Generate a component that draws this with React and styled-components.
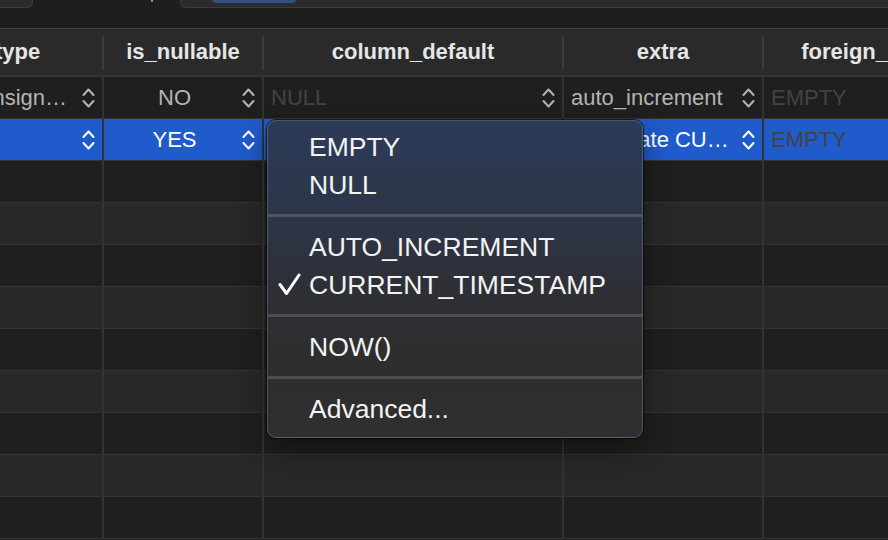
import styled, { createGlobalStyle } from 'styled-components';

const GlobalStyle = createGlobalStyle`
  html, body {
    margin: 0;
    padding: 0;
    background: #1e1e1e;
  }

  body {
    font-family: 'Liberation Sans', Arial, sans-serif;
  }
`;

const COLUMNS = '187px 160px 300px 200px 200px';

const StyledPage = styled.div`
  position: relative;
  width: 888px;
  height: 540px;
  overflow: hidden;
  background: #1e1e1e;
  display: flex;
  flex-direction: column;
`;

const StyledTabBar = styled.div`
  height: 28px;
  flex: none;
  display: flex;
  align-items: flex-start;
`;

const StyledTab = styled.div`
  height: 8px;
  box-sizing: border-box;
  background: #2b2b2b;
  border-bottom: 1px solid #3c3c3c;

  ${({ side }) =>
    side === 'left'
      ? `
      width: 33px;
      border-right: 1px solid #3c3c3c;
      border-bottom-right-radius: 6px;
  `
      : `
      flex: 1;
      padding-left: 31px;
      border-left: 1px solid #3c3c3c;
      border-bottom-left-radius: 6px;
  `}
`;

const StyledTabGap = styled.div`
  width: 147px;
  display: flex;
  justify-content: flex-end;
  padding-right: 27px;
  box-sizing: border-box;
`;

const StyledDot = styled.span`
  width: 2px;
  height: 2px;
  background: #8a8a8a;
`;

const StyledPill = styled.div`
  width: 84px;
  height: 4px;
  margin-top: -1px;
  background: #33507e;
  border-radius: 0 0 4px 4px;
`;

const StyledTable = styled.div`
  flex: 1;
  margin-left: -83px;
  display: flex;
  flex-direction: column;
`;

const StyledHeader = styled.div`
  display: grid;
  grid-template-columns: ${COLUMNS};
  height: 46px;
  background: #2a2a2b;
  border-top: 1px solid #454545;
  border-bottom: 2px solid #353535;
`;

const StyledHeaderCell = styled.div`
  position: relative;
  display: flex;
  align-items: center;
  justify-content: center;
  color: #e6e6e6;
  font-size: 22px;
  font-weight: bold;
  white-space: nowrap;
  padding-right: 2px;
  padding-left: ${({ shift }) => shift || 0}px;

  &::after {
    content: '';
    position: absolute;
    right: 0;
    top: 7px;
    bottom: 5px;
    width: 2px;
    background: #3b3b3b;
  }
`;

const StyledRow = styled.div`
  display: grid;
  grid-template-columns: ${COLUMNS};
  height: 42px;
  box-sizing: border-box;
  border-bottom: 1px solid #333;
  background: ${({ selected, alt }) =>
    selected ? '#1f5bcb' : alt ? '#282828' : '#1f1f1f'};
`;

const StyledCell = styled.div`
  min-width: 0;
  display: flex;
  align-items: center;
  gap: 4px;
  padding: 0 7px;
  border-right: 2px solid #333;
  font-size: 22px;
  color: ${({ selected }) => (selected ? '#fff' : '#b4b4b4')};
`;

const StyledText = styled.span`
  flex: 1;
  min-width: 0;
  overflow: hidden;
  white-space: nowrap;
  text-overflow: ellipsis;
  text-align: ${({ align }) => align || 'left'};

  ${({ placeholder }) =>
    placeholder &&
    `
      color: #434343;
  `}
`;

const StyledChevrons = styled.svg`
  flex: none;
  width: 13px;
  height: 22px;
`;

const StyledMenu = styled.div`
  position: absolute;
  left: 267px;
  top: 120px;
  width: 376px;
  box-sizing: border-box;
  padding: 7px 0 9px;
  border-radius: 9px;
  border: 1px solid rgba(150, 165, 195, 0.35);
  background: linear-gradient(
    180deg,
    #2c3b59 0%,
    #2d3649 28%,
    #2e3037 52%,
    #2e2e2f 75%,
    #2f2f2f 100%
  );
  box-shadow: 0 0 0 1px rgba(0, 0, 0, 0.65), 0 10px 28px rgba(0, 0, 0, 0.45);
`;

const StyledMenuItem = styled.div`
  position: relative;
  height: 38px;
  line-height: 38px;
  padding-left: 41px;
  font-size: 26.5px;
  color: #f3f3f3;
  white-space: nowrap;
`;

const StyledCheck = styled.svg`
  position: absolute;
  left: 10px;
  top: 7px;
  width: 23px;
  height: 23px;
`;

const StyledSeparator = styled.div`
  height: 3px;
  margin: 10px 0 11px;
  background: rgba(255, 255, 255, 0.15);
`;

const Chevrons = () => (
  <StyledChevrons viewBox='0 0 13 22' fill='none'>
    <path
      d='M1.5 8 L6.5 2.5 L11.5 8 M1.5 14 L6.5 19.5 L11.5 14'
      stroke='currentColor'
      strokeWidth='2'
      strokeLinecap='round'
      strokeLinejoin='round'
    />
  </StyledChevrons>
);

const headers = ['type', 'is_nullable', 'column_default', 'extra', 'foreign_key'];

const rows = [
  [
    { text: 'int(8) unsigned zerofill', chevron: true },
    { text: 'NO', align: 'center', chevron: true },
    { text: 'NULL', placeholder: true, chevron: true },
    { text: 'auto_increment', chevron: true },
    { text: 'EMPTY', placeholder: true },
  ],
  [
    { text: '', chevron: true },
    { text: 'YES', align: 'center', chevron: true },
    { text: 'CURRENT_TIMESTAMP', chevron: true },
    { text: 'on update CURRENT_TIMESTAMP', chevron: true },
    { text: 'EMPTY', placeholder: true },
  ],
];

const emptyRows = 9;

const menu = [
  ['EMPTY', 'NULL'],
  ['AUTO_INCREMENT', 'CURRENT_TIMESTAMP'],
  ['NOW()'],
  ['Advanced...'],
];

const App = () => {
  const allRows = [
    ...rows,
    ...Array.from({ length: emptyRows }, () => headers.map(() => ({ text: '' }))),
  ];

  return (
    <>
      <GlobalStyle />
      <StyledPage>
        <StyledTabBar>
          <StyledTab side='left' />
          <StyledTabGap>
            <StyledDot />
          </StyledTabGap>
          <StyledTab side='right'>
            <StyledPill />
          </StyledTab>
        </StyledTabBar>

        <StyledTable>
          <StyledHeader>
            {headers.map((h, i) => (
              <StyledHeaderCell key={h} shift={i === 0 ? 16 : 0}>
                {h}
              </StyledHeaderCell>
            ))}
          </StyledHeader>
          {allRows.map((cells, i) => (
            <StyledRow key={i} selected={i === 1} alt={i % 2 === 1}>
              {cells.map((c, j) => (
                <StyledCell key={j} selected={i === 1}>
                  <StyledText align={c.align} placeholder={c.placeholder}>
                    {c.text}
                  </StyledText>
                  {c.chevron && <Chevrons />}
                </StyledCell>
              ))}
            </StyledRow>
          ))}
        </StyledTable>

        {/* default value popup */}
        <StyledMenu>
          {menu.map((group, g) => (
            <div key={g}>
              {g > 0 && <StyledSeparator />}
              {group.map((label) => (
                <StyledMenuItem key={label}>
                  {label === 'CURRENT_TIMESTAMP' && (
                    <StyledCheck viewBox='0 0 23 23' fill='none'>
                      <path
                        d='M2 11.5 L8.5 20.5 L21 2'
                        stroke='#fff'
                        strokeWidth='3'
                        strokeLinecap='round'
                        strokeLinejoin='round'
                      />
                    </StyledCheck>
                  )}
                  {label}
                </StyledMenuItem>
              ))}
            </div>
          ))}
        </StyledMenu>
      </StyledPage>
    </>
  );
};

export default App;
